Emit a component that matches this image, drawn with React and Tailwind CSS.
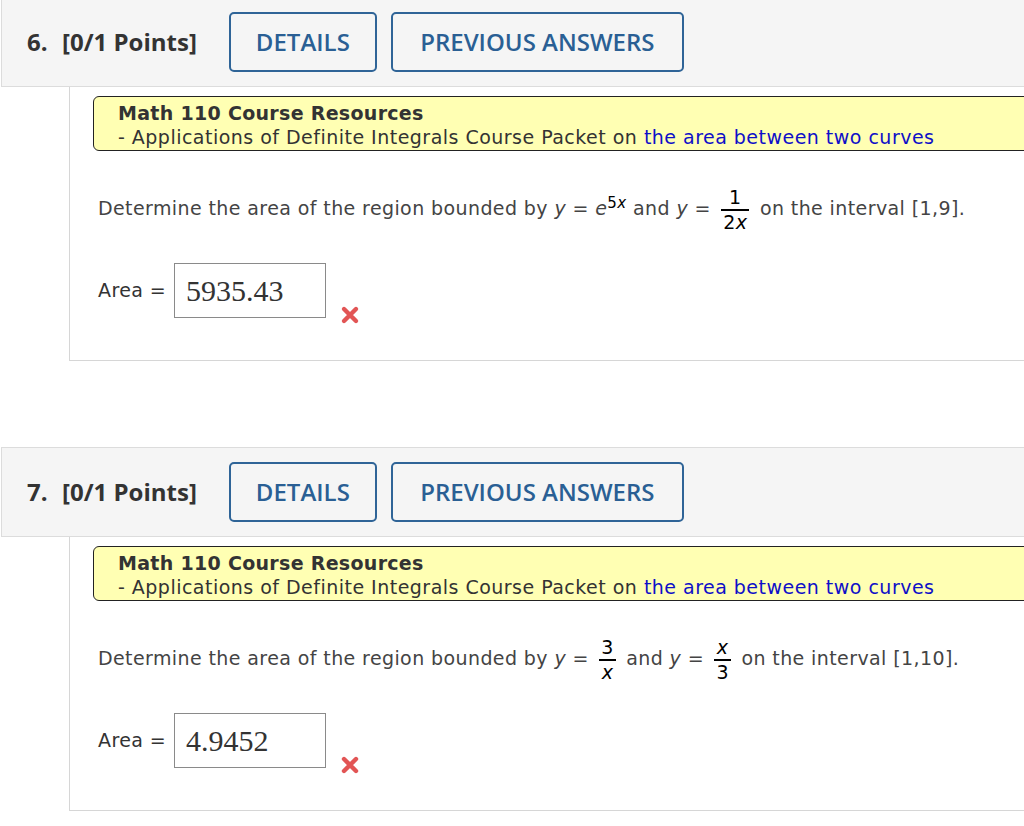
import React from 'react';

const SANS = { fontFamily: '"DejaVu Sans", Verdana, sans-serif', letterSpacing: '0.4px' };
const OPEN = { fontFamily: '"Open Sans", "Noto Sans", sans-serif' };

function RedX() {
  return (
    <svg width="20" height="20" viewBox="0 0 20 20" className="shrink-0">
      <path d="M4 4 L16 16 M16 4 L4 16" stroke="#e25555" strokeWidth="4.4" strokeLinecap="round" />
    </svg>
  );
}

function Frac({ num, den }) {
  return (
    <span className="inline-flex flex-col items-center mx-[4px] text-black leading-[21px]" style={{ verticalAlign: 'middle' }}>
      <span className="px-[2px] pb-[1px]">{num}</span>
      <span className="w-full h-[1.5px] bg-black" />
      <span className="px-[2px] pt-[1px]">{den}</span>
    </span>
  );
}

function Question({ num, eq, answer }) {
  return (
    <div>
      {/* header strip with points + buttons */}
      <div className="ml-[1px] w-[1100px] h-[90px] bg-[#f5f5f5] border border-[#dcdcdc] flex items-center pl-[25px]" style={OPEN}>
        <span className="text-[24px] font-bold text-[#333] w-[35px]">{num}.</span>
        <span className="text-[24px] font-bold text-[#333]">[0/1 Points]</span>
        <button className="ml-[32px] w-[148px] h-[60px] border-2 border-[#2f6497] rounded-[5px] text-[#2a5f94] text-[24px] font-semibold">
          DETAILS
        </button>
        <button className="ml-[14px] w-[293px] h-[60px] border-2 border-[#2f6497] rounded-[5px] text-[#2a5f94] text-[24px] font-semibold">
          PREVIOUS ANSWERS
        </button>
      </div>

      {/* question body */}
      <div className="ml-[69px] w-[1100px] border-l border-b border-[#d6d6d6] pl-[28px] pt-[9px] pb-[42px]" style={SANS}>
        <div className="-ml-[5px] h-[55px] bg-[#ffffb3] border border-[#222] rounded-l-[6px] pl-[24px] pt-[4px] text-[19px] leading-[24px] text-[#333]">
          <div className="font-bold" style={{ letterSpacing: '0.3px' }}>Math 110 Course Resources</div>
          <div style={{ letterSpacing: '0.48px' }}>
            - Applications of Definite Integrals Course Packet on{' '}
            <span className="text-[#0f0fc8]">the area between two curves</span>
          </div>
        </div>

        <div className="mt-[35px] h-[48px] flex items-center text-[19px] text-[#444] whitespace-nowrap">
          <span>Determine the area of the region bounded by&nbsp;{eq}&nbsp;on the interval {num === 6 ? '[1,9]' : '[1,10]'}.</span>
        </div>

        <div className="mt-[29px] h-[55px] flex items-start">
          <div className="flex items-center">
            <span className="text-[19px] text-[#333] mr-[8px]">Area =</span>
            <div
              className="w-[152px] h-[55px] border border-[#8a8a8a] pl-[11px] flex items-center text-[30px] text-[#333]"
              style={{ fontFamily: '"Liberation Serif", "DejaVu Serif", serif', letterSpacing: 0 }}
            >
              {answer}
            </div>
          </div>
          <div className="ml-[14px] mt-[42px]">
            <RedX />
          </div>
        </div>
      </div>
    </div>
  );
}

const I = ({ children }) => <i className="italic">{children}</i>;

export default function App() {
  const eq6 = (
    <>
      <I>y</I> = <I>e</I>
      <sup className="text-[15px] text-black relative -top-[8px]">
        5<I>x</I>
      </sup>{' '}
      and <I>y</I> = <Frac num="1" den={<>2<I>x</I></>} />
    </>
  );
  const eq7 = (
    <>
      <I>y</I> = <Frac num="3" den={<I>x</I>} /> and <I>y</I> = <Frac num={<I>x</I>} den="3" />
    </>
  );

  return (
    <div className="w-[1024px] h-[826px] overflow-hidden bg-white">
      <div className="-mt-[3px]">
        <Question num={6} eq={eq6} answer="5935.43" />
        <div className="h-[86px]" />
        <Question num={7} eq={eq7} answer="4.9452" />
      </div>
    </div>
  );
}
